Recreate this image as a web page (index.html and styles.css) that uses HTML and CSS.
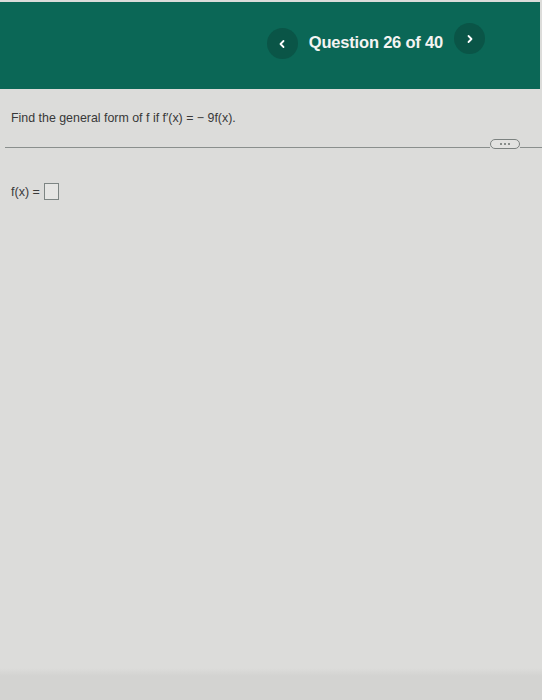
FILE: index.html
```html
<!DOCTYPE html>
<html>
<head>
<meta charset="utf-8">
<link rel="stylesheet" href="styles.css">
</head>
<body>
<div class="page">
  <header class="topbar">
    <div class="nav">
      <button class="navbtn prev" aria-label="Previous">
        <svg width="10" height="10" viewBox="0 0 10 10"><path d="M6.5 2 L3.5 5 L6.5 8" fill="none" stroke="#fff" stroke-width="1.8" stroke-linecap="round" stroke-linejoin="round"/></svg>
      </button>
      <span class="qtitle">Question 26 of 40</span>
      <button class="navbtn next" aria-label="Next">
        <svg width="10" height="10" viewBox="0 0 10 10"><path d="M3.5 2 L6.5 5 L3.5 8" fill="none" stroke="#fff" stroke-width="1.8" stroke-linecap="round" stroke-linejoin="round"/></svg>
      </button>
    </div>
  </header>
  <main class="content">
    <p class="prompt">Find the general form of f if f&#8242;(x) = &#8722; 9f(x).</p>
    <div class="divider">
      <span class="line"></span>
      <span class="more"><i></i><i></i><i></i></span>
      <span class="line short"></span>
    </div>
    <div class="answer">
      <span class="lhs">f(x) =</span>
      <span class="box"></span>
    </div>
  </main>
</div>
</body>
</html>
```
FILE: styles.css
```css
html, body {
  margin: 0;
  padding: 0;
  background: #dcdcda;
}
body {
  font-family: "Liberation Sans", Arial, sans-serif;
  color: #3a3a3a;
  width: 542px;
  height: 700px;
  overflow: hidden;
}
.page {
  display: flex;
  flex-direction: column;
  height: 700px;
  background: linear-gradient(to bottom, #dcdcda 0, #dcdcda 668px, #d3d3d1 676px, #d3d3d1 700px);
}
.topbar {
  margin-top: 2px;
  height: 81px;
  padding-bottom: 6px;
  margin-right: 2px;
  background: #0b6756;
  display: flex;
  justify-content: flex-end;
  padding-right: 55px;
}
.nav {
  display: flex;
  align-items: center;
  gap: 11px;
}
.navbtn {
  width: 31px;
  height: 31px;
  border-radius: 50%;
  border: none;
  background: #0a5547;
  display: flex;
  align-items: center;
  justify-content: center;
  padding: 0;
}
.navbtn.prev { margin-top: 2px; }
.navbtn.next { margin-top: -8px; }
.qtitle {
  color: #f4f4f2;
  font-weight: bold;
  font-size: 16.5px;
  letter-spacing: -0.2px;
}
.content {
  padding: 0 0 0 11px;
}
.prompt {
  margin: 22px 0 0 0;
  font-size: 12.4px;
  color: #383838;
}
.divider {
  display: flex;
  align-items: center;
  margin: 20px 0 0 -6px;
}
.divider .line {
  flex: 1;
  height: 1px;
  background: #8a8f8d;
}
.divider .line.short {
  flex: 0 0 22px;
}
.more {
  width: 28px;
  height: 8px;
  border: 1px solid #7c8280;
  border-radius: 6px;
  display: flex;
  align-items: center;
  justify-content: center;
  gap: 2px;
  margin-top: -6px;
  background: #e2e2e0;
}
.more i {
  width: 2px;
  height: 2px;
  background: #6a706e;
  border-radius: 50%;
}
.answer {
  display: flex;
  align-items: center;
  gap: 4px;
  margin-top: 34px;
}
.lhs {
  font-size: 12.5px;
  color: #3a3a3a;
}
.box {
  width: 13px;
  height: 15px;
  border: 1px solid #7d8583;
  background: #e6e6e4;
}
```
